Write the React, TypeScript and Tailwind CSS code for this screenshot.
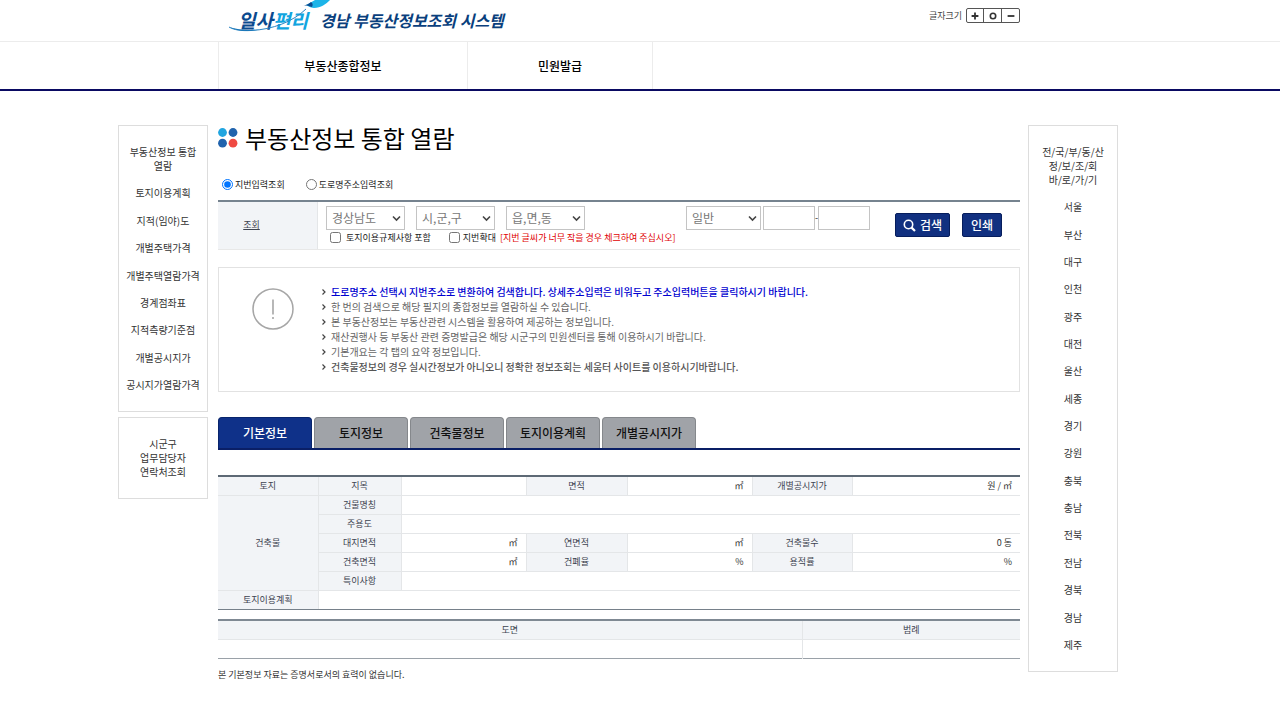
import type { ReactNode } from "react";

const sideMenu = [
  "부동산정보 통합 열람",
  "토지이용계획",
  "지적(임야)도",
  "개별주택가격",
  "개별주택열람가격",
  "경계점좌표",
  "지적측량기준점",
  "개별공시지가",
  "공시지가열람가격",
];

const regions = [
  "서울", "부산", "대구", "인천", "광주", "대전", "울산", "세종", "경기",
  "강원", "충북", "충남", "전북", "전남", "경북", "경남", "제주",
];

const notices = [
  {
    text: "도로명주소 선택시 지번주소로 변환하여 검색합니다. 상세주소입력은 비워두고 주소입력버튼을 클릭하시기 바랍니다.",
    style: "font-medium text-[#0000d0]",
  },
  { text: "한 번의 검색으로 해당 필지의 종합정보를 열람하실 수 있습니다.", style: "" },
  { text: "본 부동산정보는 부동산관련 시스템을 활용하여 제공하는 정보입니다.", style: "" },
  { text: "재산권행사 등 부동산 관련 증명발급은 해당 시군구의 민원센터를 통해 이용하시기 바랍니다.", style: "" },
  { text: "기본개요는 각 탭의 요약 정보입니다.", style: "" },
  {
    text: "건축물정보의 경우 실시간정보가 아니오니 정확한 정보조회는 세움터 사이트를 이용하시기바랍니다.",
    style: "font-medium text-[#555]",
  },
];

const tabs = ["기본정보", "토지정보", "건축물정보", "토지이용계획", "개별공시지가"];

function Logo() {
  return (
    <a href="#" className="relative flex items-center gap-3 pl-5 font-bold italic leading-6">
      <svg
        className="absolute -top-2 left-2 text-[#0b4a8f]"
        width="104"
        height="34"
        viewBox="0 0 104 34"
        fill="none"
        aria-hidden="true"
      >
        <path d="M3 27c5 3 12 4 22 3.500 22-1 42-9 55-21.500" stroke="#2a86c4" strokeWidth="1" />
        <path d="M3 27c8 4.500 19 5 32 2.500-12 1-23 .5-32-2.500z" fill="#1a76b8" />
        <path d="M80 5c4-2 6-3 9-5h15c-4 4-9 8-16 8-2 0-5-1-8-3z" fill="#1cb4e8" />
        <path d="M76 6c4-1 7-2 9-4 2 1 2 3 1 5-3-1-6-2-10-1z" fill="currentColor" />
      </svg>
      <span className="text-[19px] text-[#0b4a8f]">
        일사<span className="text-[#12a5df]">편리</span>
      </span>
      <span className="text-base text-[#0a3f7d]">경남 부동산정보조회 시스템</span>
    </a>
  );
}

function FontSizeControl() {
  return (
    <div className="flex items-center gap-1 text-[9px] text-[#444]">
      <span>글자크기</span>
      <div className="flex h-[15px] divide-x divide-[#555] rounded-xs border border-[#555]">
        <button type="button" aria-label="크게" className="flex w-[17px] items-center justify-center">
          <svg width="8" height="8" viewBox="0 0 8 8" stroke="#333" strokeWidth="1.8">
            <path d="M4 .6v6.800M.6 4h6.800" />
          </svg>
        </button>
        <button type="button" aria-label="기본" className="flex w-[18px] items-center justify-center">
          <svg width="8" height="8" viewBox="0 0 8 8" stroke="#333" strokeWidth="1.600" fill="none">
            <circle cx="4" cy="4" r="2.700" />
          </svg>
        </button>
        <button type="button" aria-label="작게" className="flex w-[17px] items-center justify-center">
          <svg width="8" height="8" viewBox="0 0 8 8" stroke="#333" strokeWidth="1.800">
            <path d="M.6 4h6.800" />
          </svg>
        </button>
      </div>
    </div>
  );
}

function Select({ label, value, className }: { label: string; value: string; className: string }) {
  return (
    <div className={`relative h-6 ${className}`}>
      <select
        aria-label={label}
        className="block h-full w-full appearance-none border border-[#c4c4c4] bg-white pl-[5px] text-xs leading-5 text-[#777]"
      >
        <option>{value}</option>
      </select>
      <svg
        className="pointer-events-none absolute right-1 top-2"
        width="9"
        height="8"
        viewBox="0 0 9 8"
        fill="none"
        stroke="#444"
        strokeWidth="1.600"
        aria-hidden="true"
      >
        <path d="M1 2.500l3.500 3.500L8 2.500" />
      </svg>
    </div>
  );
}

function Th({ children, rowSpan }: { children: ReactNode; rowSpan?: number }) {
  return (
    <th
      scope="row"
      rowSpan={rowSpan}
      className="border-x border-b border-[#e4e6e8] bg-[#f2f4f7] p-0 text-center font-normal text-[#3d4350] first:border-l-0"
    >
      {children}
    </th>
  );
}

function Td({ children, colSpan }: { children?: ReactNode; colSpan?: number }) {
  return (
    <td colSpan={colSpan} className="border-b border-[#e4e6e8] py-0 pl-0 pr-2 text-right text-[#333]">
      {children}
    </td>
  );
}

function SearchForm() {
  return (
    <form>
      <div className="flex gap-[21px] pl-1 text-[9px] text-[#222]">
        <label className="flex items-center gap-[2px]">
          <input type="radio" name="mode" defaultChecked className="size-[11px] accent-[#0075ff]" />
          지번입력조회
        </label>
        <label className="flex items-center gap-[2px]">
          <input type="radio" name="mode" className="size-[11px]" />
          도로명주소입력조회
        </label>
      </div>

      <div className="mt-2 flex min-h-[50px] border-b border-t-2 border-b-[#e8e8e8] border-t-[#76838f]">
        <div className="flex w-[100px] shrink-0 items-center justify-center border-r border-[#e4e6e8] bg-[#f2f4f7] pr-8 text-[9px] text-[#3d4350] underline">
          조회
        </div>
        <div className="flex flex-1 items-center justify-between pl-2 pr-[18px]">
          <div>
            <div className="flex items-center">
              <Select label="시도" value="경상남도" className="w-[79px]" />
              <Select label="시군구" value="시,군,구" className="ml-[11px] w-[79px]" />
              <Select label="읍면동" value="읍,면,동" className="ml-[11px] w-[79px]" />
              <Select label="구분" value="일반" className="ml-[101px] w-[75px]" />
              <input aria-label="본번" className="ml-[2px] h-6 w-[52px] border border-[#c4c4c4]" />
              <span className="w-[3px] text-center text-[9px] leading-3">-</span>
              <input aria-label="부번" className="h-6 w-[52px] border border-[#c4c4c4]" />
            </div>
            <div className="flex items-center pl-1 text-[9px] leading-[15px] text-[#222]">
              <label className="flex items-center gap-[5px]">
                <input type="checkbox" className="size-[11px]" />
                토지이용규제사항 포함
              </label>
              <label className="ml-[18px] flex items-center gap-[3px]">
                <input type="checkbox" className="size-[11px]" />
                지번확대
              </label>
              <span className="ml-1 text-[#e00000]">[지번 글씨가 너무 작을 경우 체크하여 주십시오]</span>
            </div>
          </div>
          <div className="flex gap-3 text-xs font-medium text-white">
            <button
              type="button"
              className="flex h-6 w-[55px] items-center justify-center gap-1 rounded-xs border border-[#061d5c] bg-[#113080]"
            >
              <svg width="13" height="13" viewBox="0 0 13 13" fill="none" stroke="#fff" aria-hidden="true">
                <circle cx="5.500" cy="5.500" r="4.200" strokeWidth="1.600" />
                <path d="M8.600 8.600l3.400 3.400" strokeWidth="2.200" />
              </svg>
              검색
            </button>
            <button type="button" className="h-6 w-10 rounded-xs border border-[#061d5c] bg-[#113080]">
              인쇄
            </button>
          </div>
        </div>
      </div>
    </form>
  );
}

function Notice() {
  return (
    <section className="mt-[17px] flex border border-[#e2e2e2] pb-[17px] pl-[33px] pt-4">
      <svg className="mt-1 shrink-0" width="42" height="42" viewBox="0 0 42 42" fill="none" aria-hidden="true">
        <circle cx="21" cy="21" r="20" stroke="#a6a6a6" strokeWidth="1.500" />
        <path d="M21 11.500v15M21 29v2" stroke="#9a9a9a" strokeWidth="1.400" />
      </svg>
      <ul className="ml-7 text-[10px] leading-[15px] text-[#666]">
        {notices.map((n) => (
          <li key={n.text} className={`flex items-center gap-[5px] ${n.style}`}>
            <svg width="4" height="8" viewBox="0 0 4 8" fill="none" stroke="#444" strokeWidth="1.200" aria-hidden="true">
              <path d="M.5 2.500L3 5 .5 7.500" />
            </svg>
            {n.text}
          </li>
        ))}
      </ul>
    </section>
  );
}

function InfoTable() {
  return (
    <table className="mt-[25px] w-full table-fixed border-collapse border-t-2 border-t-[#5d6975] text-[9px] leading-[18px]">
      <colgroup>
        <col className="w-[100px]" />
        <col className="w-[83px]" />
        <col className="w-[125px]" />
        <col className="w-[101px]" />
        <col className="w-[125px]" />
        <col className="w-[100px]" />
        <col />
      </colgroup>
      <tbody>
        <tr className="h-[19px]">
          <Th>토지</Th>
          <Th>지목</Th>
          <Td />
          <Th>면적</Th>
          <Td>㎡</Td>
          <Th>개별공시지가</Th>
          <Td>원 / ㎡</Td>
        </tr>
        <tr className="h-[19px]">
          <Th rowSpan={5}>건축물</Th>
          <Th>건물명칭</Th>
          <Td colSpan={5} />
        </tr>
        <tr className="h-[19px]">
          <Th>주용도</Th>
          <Td colSpan={5} />
        </tr>
        <tr className="h-[19px]">
          <Th>대지면적</Th>
          <Td>㎡</Td>
          <Th>연면적</Th>
          <Td>㎡</Td>
          <Th>건축물수</Th>
          <Td>0 동</Td>
        </tr>
        <tr className="h-[19px]">
          <Th>건축면적</Th>
          <Td>㎡</Td>
          <Th>건폐율</Th>
          <Td>%</Td>
          <Th>용적률</Th>
          <Td>%</Td>
        </tr>
        <tr className="h-[19px]">
          <Th>특이사항</Th>
          <Td colSpan={5} />
        </tr>
        <tr className="h-[19px] *:border-b-[#76808a]">
          <Th>토지이용계획</Th>
          <Td colSpan={6} />
        </tr>
      </tbody>
    </table>
  );
}

function DrawingTable() {
  return (
    <table className="mt-[9px] w-full table-fixed border-collapse border-b border-t-2 border-b-[#9aa1a8] border-t-[#7f8993] text-[9px] leading-[18px]">
      <thead>
        <tr className="h-[19px] bg-[#f2f4f7] text-[#3d4350]">
          <th className="border-b border-r border-[#e4e6e8] p-0 font-normal">도면</th>
          <th className="w-[218px] border-b border-[#e4e6e8] p-0 font-normal">범례</th>
        </tr>
      </thead>
      <tbody>
        <tr className="h-[19px]">
          <td className="border-r border-[#e4e6e8] p-0" />
          <td className="p-0" />
        </tr>
      </tbody>
    </table>
  );
}

export default function App() {
  return (
    <div className="min-h-screen bg-white font-['Noto_Sans_CJK_KR',sans-serif] text-[#222]">
      <header>
        <div className="border-b border-[#ececec]">
          <div className="mx-auto flex h-[41px] max-w-[1044px] items-start justify-between pl-[100px] pr-[142px] pt-2">
            <Logo />
            <FontSizeControl />
          </div>
        </div>
        <nav className="border-b-2 border-[#0a0a62]">
          <div className="mx-auto flex h-[47px] max-w-[1044px] pl-[100px] pr-[142px] text-xs font-medium text-black">
            <a href="#" className="flex w-[250px] items-center justify-center border-x border-[#ececec]">
              부동산종합정보
            </a>
            <a href="#" className="flex w-[185px] items-center justify-center border-r border-[#ececec]">
              민원발급
            </a>
          </div>
        </nav>
      </header>

      <div className="mx-auto flex max-w-[1044px] items-start pr-11 pt-[34px]">
        {/* 좌측 메뉴 */}
        <aside className="w-[90px] shrink-0 text-center text-[10px] leading-[14px] text-[#333]">
          <ul className="flex min-h-[287px] flex-col justify-between border border-[#ddd] py-[19px]">
            {sideMenu.map((m) => (
              <li key={m}>
                <a href="#" className="block break-keep px-1">
                  {m}
                </a>
              </li>
            ))}
          </ul>
          <a href="#" className="mt-[5px] block border border-[#ddd] py-[19px]">
            시군구
            <br />
            업무담당자
            <br />
            연락처조회
          </a>
        </aside>

        <main className="ml-[10px] mr-2 min-w-0 flex-1">
          <h1 className="flex items-center gap-[7px] text-2xl font-normal leading-[26px] text-black">
            <svg width="20" height="20" viewBox="0 0 20 20" aria-hidden="true">
              <circle cx="4.500" cy="4.500" r="4.400" fill="#21a5e0" />
              <circle cx="15" cy="4.500" r="4.400" fill="#2063ad" />
              <circle cx="4.500" cy="15.200" r="4.400" fill="#2063ad" />
              <circle cx="15" cy="15.200" r="4.400" fill="#ef4a43" />
            </svg>
            부동산정보 통합 열람
          </h1>

          <div className="mt-[27px]">
            <SearchForm />
          </div>
          <Notice />

          {/* 탭 */}
          <div role="tablist" className="mt-[25px] flex gap-[2px] border-b-2 border-[#0a1f66] text-xs font-medium">
            {tabs.map((t, i) => (
              <button
                key={t}
                type="button"
                role="tab"
                aria-selected={i === 0}
                className={`h-[31px] w-[94px] rounded-t-sm border border-b-0 ${
                  i === 0 ? "border-[#08246b] bg-[#0f3189] text-white" : "border-[#85888c] bg-[#a0a3a8] text-[#111]"
                }`}
              >
                {t}
              </button>
            ))}
          </div>

          <InfoTable />
          <DrawingTable />
          <p className="mt-2 text-[9px] leading-4 text-[#333]">본 기본정보 자료는 증명서로서의 효력이 없습니다.</p>
        </main>

        {/* 전국 바로가기 */}
        <aside className="w-[90px] shrink-0 text-center text-[10px] leading-[14px] text-[#333]">
          <ul className="flex min-h-[547px] flex-col justify-between border border-[#ddd] py-[19px]">
            <li>
              전/국/부/동/산
              <br />
              정/보/조/회
              <br />
              바/로/가/기
            </li>
            {regions.map((r) => (
              <li key={r}>
                <a href="#">{r}</a>
              </li>
            ))}
          </ul>
        </aside>
      </div>
    </div>
  );
}
